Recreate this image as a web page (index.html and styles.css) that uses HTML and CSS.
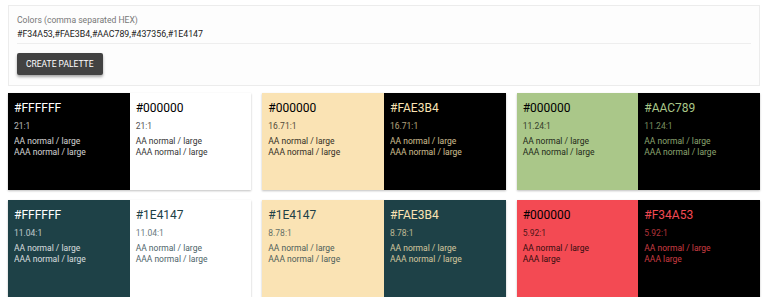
FILE: index.html
```html
<!DOCTYPE html>
<html>
<head>
<meta charset="utf-8">
<link rel="stylesheet" href="styles.css">
</head>
<body>
<div class="page">
  <div class="form-card">
    <label class="field-label">Colors (comma separated HEX)</label>
    <div class="field-value">#F34A53,#FAE3B4,#AAC789,#437356,#1E4147</div>
    <button class="btn">CREATE PALETTE</button>
  </div>
  <div class="grid">
    <div class="pair">
      <div class="half" style="background:#000000;color:#FFFFFF"><div class="hex">#FFFFFF</div><div class="ratio">21:1</div><div class="rules">AA normal / large<br>AAA normal / large</div></div>
      <div class="half" style="background:#FFFFFF;color:#000000"><div class="hex">#000000</div><div class="ratio">21:1</div><div class="rules">AA normal / large<br>AAA normal / large</div></div>
    </div>
    <div class="pair">
      <div class="half" style="background:#FAE3B4;color:#000000"><div class="hex">#000000</div><div class="ratio">16.71:1</div><div class="rules">AA normal / large<br>AAA normal / large</div></div>
      <div class="half" style="background:#000000;color:#FAE3B4"><div class="hex">#FAE3B4</div><div class="ratio">16.71:1</div><div class="rules">AA normal / large<br>AAA normal / large</div></div>
    </div>
    <div class="pair">
      <div class="half" style="background:#AAC789;color:#000000"><div class="hex">#000000</div><div class="ratio">11.24:1</div><div class="rules">AA normal / large<br>AAA normal / large</div></div>
      <div class="half" style="background:#000000;color:#AAC789"><div class="hex">#AAC789</div><div class="ratio">11.24:1</div><div class="rules">AA normal / large<br>AAA normal / large</div></div>
    </div>
    <div class="pair">
      <div class="half" style="background:#1E4147;color:#FFFFFF"><div class="hex">#FFFFFF</div><div class="ratio">11.04:1</div><div class="rules">AA normal / large<br>AAA normal / large</div></div>
      <div class="half" style="background:#FFFFFF;color:#1E4147"><div class="hex">#1E4147</div><div class="ratio">11.04:1</div><div class="rules">AA normal / large<br>AAA normal / large</div></div>
    </div>
    <div class="pair">
      <div class="half" style="background:#FAE3B4;color:#1E4147"><div class="hex">#1E4147</div><div class="ratio">8.78:1</div><div class="rules">AA normal / large<br>AAA normal / large</div></div>
      <div class="half" style="background:#1E4147;color:#FAE3B4"><div class="hex">#FAE3B4</div><div class="ratio">8.78:1</div><div class="rules">AA normal / large<br>AAA normal / large</div></div>
    </div>
    <div class="pair">
      <div class="half" style="background:#F34A53;color:#000000"><div class="hex">#000000</div><div class="ratio">5.92:1</div><div class="rules">AA normal / large<br>AAA large</div></div>
      <div class="half" style="background:#000000;color:#F34A53"><div class="hex">#F34A53</div><div class="ratio">5.92:1</div><div class="rules">AA normal / large<br>AAA large</div></div>
    </div>
  </div>
</div>
</body>
</html>
```

FILE: styles.css
```css
html, body {
  margin: 0;
  padding: 0;
  background: #ffffff;
  font-family: Roboto, "Liberation Sans", sans-serif;
}
.page {
  padding: 5px 8px 0 8px;
}
.form-card {
  border: 1px solid #ececec;
  background: #fdfdfd;
  padding: 9px 8px 8px 8px;
  height: 62px;
  display: flex;
  flex-direction: column;
  align-items: flex-start;
}
.field-label {
  font-size: 8.6px;
  line-height: 11px;
  color: #777777;
}
.field-value {
  align-self: stretch;
  font-size: 8.8px;
  line-height: 12px;
  padding-top: 2px;
  padding-bottom: 3px;
  color: #222222;
  border-bottom: 1px solid #eeeeee;
}
.btn {
  margin-top: 9px;
  background: #424242;
  color: #ffffff;
  border: none;
  border-radius: 2px;
  font-family: Roboto, "Liberation Sans", sans-serif;
  font-size: 8.5px;
  height: 22px;
  padding: 0 9px;
  box-shadow: 0 2px 3px rgba(0,0,0,0.35);
}
.grid {
  margin-top: 7px;
  display: grid;
  grid-template-columns: repeat(3, 1fr);
  column-gap: 11px;
  row-gap: 10px;
}
.pair {
  display: flex;
  height: 97px;
  box-shadow: 0 1px 2px rgba(0,0,0,0.25);
}
.half {
  flex: 1;
  padding: 8px 6px;
}
.hex {
  font-size: 12px;
  line-height: 14px;
}
.ratio {
  font-size: 8.5px;
  line-height: 10px;
  margin-top: 6px;
  opacity: 0.7;
}
.rules {
  font-size: 8.5px;
  line-height: 11px;
  margin-top: 5px;
  opacity: 0.82;
}
```
